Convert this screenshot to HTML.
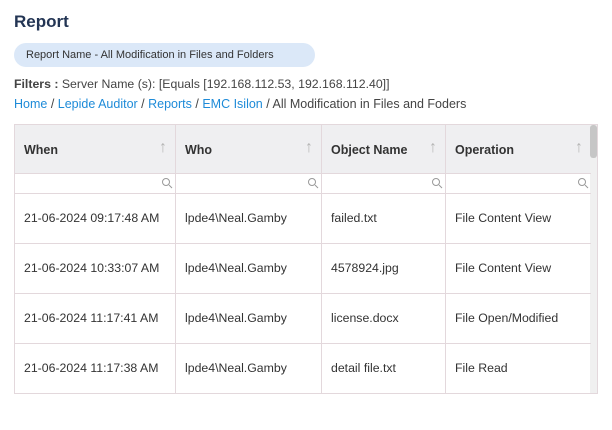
<!DOCTYPE html>
<html><head><style>
*{margin:0;padding:0;box-sizing:border-box}
body{width:612px;height:430px;background:#fff;font-family:"Liberation Sans",sans-serif;color:#333;position:relative;overflow:hidden}
.a{position:absolute;white-space:nowrap}
h1{position:absolute;left:14px;top:12px;font-size:17px;font-weight:bold;color:#233554}
.pill{position:absolute;left:14px;top:43px;width:301px;height:24px;border-radius:12px;background:#dbe8f8;font-size:11px;line-height:24px;padding-left:12px;color:#333}
.f{left:14px;top:77px;font-size:12.3px;color:#444}
.b{left:14px;top:97px;font-size:12.5px;color:#444}
.b span{color:#1e8bd8}
.tbl{position:absolute;left:14px;top:124px;width:584px;height:270px;border:1px solid #e3d8dc}
.hd{position:absolute;left:0;top:0;width:576px;height:49px;background:#efeff1}
.sb{position:absolute;right:0;top:0;width:7px;height:268px;background:#f0f0f0}
.th{position:absolute;left:0;width:7px;height:33px;top:0;background:#c6c6c6;border-radius:3px}
.v{position:absolute;top:0;width:1px;height:268px;background:#e3d8dc}
.h{position:absolute;left:0;width:576px;height:1px;background:#e3d8dc}
.c{position:absolute;font-size:12.3px;color:#333;white-space:nowrap}
.hc{font-weight:bold;color:#333;font-size:12.5px}
.ar{position:absolute;color:#b5b5b5;font-size:16px}
</style></head><body>
<h1>Report</h1>
<div class="pill">Report Name - All Modification in Files and Folders</div>
<div class="a f"><b>Filters :</b> Server Name (s): [Equals [192.168.112.53, 192.168.112.40]]</div>
<div class="a b"><span>Home</span> / <span>Lepide Auditor</span> / <span>Reports</span> / <span>EMC Isilon</span> / All Modification in Files and Foders</div>
<div class="tbl">
<div class="hd"></div>
<div class="sb"><div class="th"></div></div>
<div class="v" style="left:160px"></div><div class="v" style="left:306px"></div><div class="v" style="left:430px"></div>
<div class="h" style="top:48px"></div><div class="h" style="top:68px"></div><div class="h" style="top:118px"></div><div class="h" style="top:168px"></div><div class="h" style="top:218px"></div>
<div class="c hc" style="left:9px;top:18px">When</div>
<div class="c hc" style="left:170px;top:18px">Who</div>
<div class="c hc" style="left:316px;top:18px">Object Name</div>
<div class="c hc" style="left:440px;top:18px">Operation</div>
<div class="ar" style="left:144px;top:14px">↑</div><div class="ar" style="left:290px;top:14px">↑</div><div class="ar" style="left:414px;top:14px">↑</div><div class="ar" style="left:560px;top:14px">↑</div>
<svg style="position:absolute;left:0;top:52px" width="576" height="14"><g fill="none" stroke="#999" stroke-width="1"><circle cx="151" cy="5" r="3.5"/><path d="M154 8l3 3"/><circle cx="297" cy="5" r="3.5"/><path d="M300 8l3 3"/><circle cx="421" cy="5" r="3.5"/><path d="M424 8l3 3"/><circle cx="567" cy="5" r="3.5"/><path d="M570 8l3 3"/></g></svg>
<div class="c" style="left:9px;top:86px">21-06-2024 09:17:48 AM</div><div class="c" style="left:170px;top:86px">lpde4\Neal.Gamby</div><div class="c" style="left:316px;top:86px">failed.txt</div><div class="c" style="left:440px;top:86px">File Content View</div>
<div class="c" style="left:9px;top:136px">21-06-2024 10:33:07 AM</div><div class="c" style="left:170px;top:136px">lpde4\Neal.Gamby</div><div class="c" style="left:316px;top:136px">4578924.jpg</div><div class="c" style="left:440px;top:136px">File Content View</div>
<div class="c" style="left:9px;top:186px">21-06-2024 11:17:41 AM</div><div class="c" style="left:170px;top:186px">lpde4\Neal.Gamby</div><div class="c" style="left:316px;top:186px">license.docx</div><div class="c" style="left:440px;top:186px">File Open/Modified</div>
<div class="c" style="left:9px;top:236px">21-06-2024 11:17:38 AM</div><div class="c" style="left:170px;top:236px">lpde4\Neal.Gamby</div><div class="c" style="left:316px;top:236px">detail file.txt</div><div class="c" style="left:440px;top:236px">File Read</div>
</div>
</body></html>
